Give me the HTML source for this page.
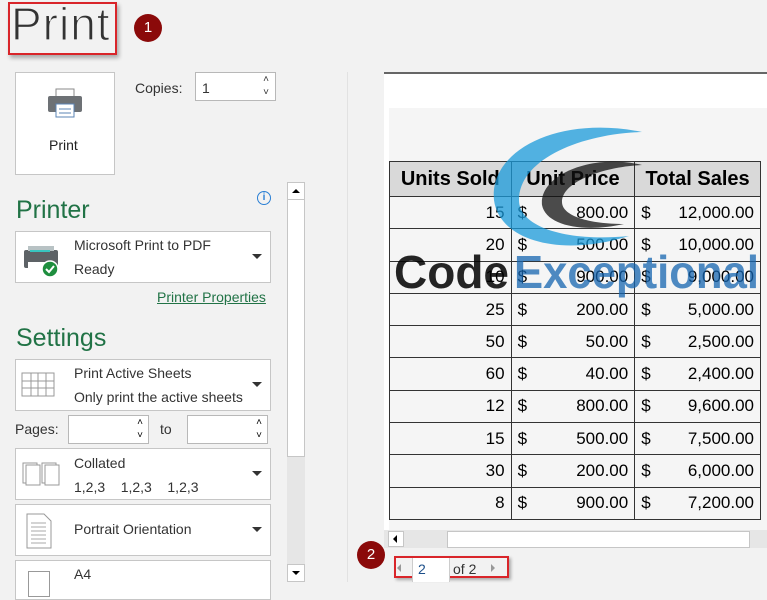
<!DOCTYPE html>
<html><head><style>
body{margin:0;width:767px;height:582px;overflow:hidden;background:#f2f2f2;font-family:"Liberation Sans",sans-serif;position:relative}
.a{position:absolute}
.dd{position:absolute;left:15px;width:256px;background:#fff;border:1px solid #c6c6c6;box-sizing:border-box;font-size:14px;color:#333}
.tri{position:absolute;right:8px;width:0;height:0;border-left:5px solid transparent;border-right:5px solid transparent;border-top:5px solid #333}
table{border-collapse:collapse;font-family:"Liberation Sans",sans-serif}
td{border:1px solid #333;height:32.3px;padding:0 6px;font-size:17px;color:#000;box-sizing:border-box}
th{border:1px solid #333;background:#d9d9d9;height:32px;font-size:20px;font-weight:bold}
.r{text-align:right}
.s{position:absolute;left:6px}
</style></head><body>
<div class="a" style="left:8px;top:2px;width:105px;height:49px;border:2px solid #d9252a;box-shadow:2px 3px 4px rgba(0,0,0,.3)"></div>
<div class="a" style="left:11px;top:-3px;font-size:46px;color:#333;letter-spacing:1px;-webkit-text-stroke:1.2px #f2f2f2">Print</div>
<div class="a" style="left:134px;top:14px;width:28px;height:28px;border-radius:50%;background:#8b0a0a;color:#fff;font-size:15px;text-align:center;line-height:28px">1</div>
<div class="a" style="left:15px;top:72px;width:100px;height:103px;background:#fff;border:1px solid #c6c6c6;box-sizing:border-box"></div>
<svg class="a" style="left:47px;top:88px" width="36" height="30"><rect x="9" y="1" width="18" height="9" fill="#fff" stroke="#8a8a8a"/><rect x="1" y="8" width="34" height="16" rx="2" fill="#6d7175"/><rect x="9" y="16" width="18" height="13" fill="#fff" stroke="#5b84b5"/><line x1="12" y1="21" x2="24" y2="21" stroke="#5b84b5"/><line x1="12" y1="25" x2="24" y2="25" stroke="#5b84b5"/></svg>
<div class="a" style="left:49px;top:137px;font-size:14px;color:#222">Print</div>
<div class="a" style="left:135px;top:80px;font-size:14px;color:#333">Copies:</div>
<div class="a" style="left:195px;top:72px;width:81px;height:29px;background:#fff;border:1px solid #b8b8b8;box-sizing:border-box;font-size:14px;padding:7px 6px;color:#333">1<span class="a" style="right:6px;top:0;font-size:10px;line-height:13px">˄<br>˅</span></div>
<div class="a" style="left:347px;top:72px;width:1px;height:510px;background:#e2e2e2"></div>
<div class="a" style="left:16px;top:196px;font-size:25px;color:#217346">Printer</div>
<div class="a" style="left:257px;top:191px;width:12px;height:12px;border:1.5px solid #2a7fd4;border-radius:50%;color:#2a7fd4;font-size:10px;text-align:center;line-height:12px;font-weight:bold">i</div>
<div class="dd" style="top:231px;height:52px"><svg class="a" style="left:6px;top:12px" width="40" height="34"><rect x="2" y="6" width="34" height="18" rx="2" fill="#5d6266"/><rect x="6" y="2" width="26" height="5" fill="#b8c2c4"/><rect x="8" y="6" width="20" height="2" fill="#38c5c0"/><rect x="6" y="18" width="22" height="6" fill="#fff"/><circle cx="28" cy="25" r="8" fill="#1e8e3e" stroke="#fff" stroke-width="1.5"/><path d="M24 25l3 3 5-6" stroke="#fff" stroke-width="2" fill="none"/></svg><div class="a" style="left:58px;top:5px">Microsoft Print to PDF</div><div class="a" style="left:58px;top:29px">Ready</div><div class="tri" style="top:22px"></div></div>
<div class="a" style="left:157px;top:289px;font-size:14px;color:#217346;text-decoration:underline">Printer Properties</div>
<div class="a" style="left:16px;top:324px;font-size:25px;color:#217346">Settings</div>
<div class="dd" style="top:359px;height:52px"><svg class="a" style="left:5px;top:12px" width="34" height="28"><g stroke="#999" fill="#fff"><rect x="1" y="1" width="32" height="23"/><path d="M1 9h32M1 16h32M10 1v23M17 1v23M25 1v23"/></g></svg><div class="a" style="left:58px;top:5px">Print Active Sheets</div><div class="a" style="left:58px;top:29px">Only print the active sheets</div><div class="tri" style="top:22px"></div></div>
<div class="a" style="left:15px;top:421px;font-size:14px;color:#333">Pages:</div>
<div class="a" style="left:68px;top:415px;width:81px;height:29px;background:#fff;border:1px solid #b8b8b8;box-sizing:border-box"><span class="a" style="right:5px;top:0;font-size:10px;line-height:13px">˄<br>˅</span></div>
<div class="a" style="left:160px;top:421px;font-size:14px;color:#333">to</div>
<div class="a" style="left:187px;top:415px;width:81px;height:29px;background:#fff;border:1px solid #b8b8b8;box-sizing:border-box"><span class="a" style="right:5px;top:0;font-size:10px;line-height:13px">˄<br>˅</span></div>
<div class="dd" style="top:448px;height:52px"><svg class="a" style="left:5px;top:12px" width="40" height="26"><g stroke="#999" fill="#fff"><rect x="2" y="2" width="14" height="20"/><rect x="5" y="4" width="14" height="20"/><rect x="21" y="2" width="14" height="20"/><rect x="24" y="4" width="14" height="20"/></g></svg><div class="a" style="left:58px;top:6px">Collated</div><div class="a" style="left:58px;top:30px;word-spacing:0">1,2,3&nbsp;&nbsp;&nbsp;&nbsp;1,2,3&nbsp;&nbsp;&nbsp;&nbsp;1,2,3</div><div class="tri" style="top:22px"></div></div>
<div class="dd" style="top:504px;height:52px"><svg class="a" style="left:10px;top:8px" width="26" height="36"><path d="M1 1h17l7 7v27H1z" fill="#fff" stroke="#999"/><path d="M5 10h15M5 14h15M5 18h15M5 22h15M5 26h15M5 30h15" stroke="#aaa"/></svg><div class="a" style="left:58px;top:16px">Portrait Orientation</div><div class="tri" style="top:22px"></div></div>
<div class="dd" style="top:560px;height:40px"><div class="a" style="left:12px;top:10px;width:20px;height:24px;border:1px solid #999"></div><div class="a" style="left:58px;top:5px">A4</div></div>
<div class="a" style="left:287px;top:182px;width:18px;height:400px;background:#e6e6e6"></div>
<div class="a" style="left:287px;top:182px;width:18px;height:275px;background:#fff;border:1px solid #c6c6c6;box-sizing:border-box"></div>
<div class="a" style="left:287px;top:182px;width:18px;height:18px;border:1px solid #c6c6c6;box-sizing:border-box;background:#fff"><div class="a" style="left:4px;top:6px;border-left:4px solid transparent;border-right:4px solid transparent;border-bottom:4px solid #000"></div></div>
<div class="a" style="left:287px;top:564px;width:18px;height:18px;border:1px solid #c6c6c6;box-sizing:border-box;background:#fff"><div class="a" style="left:4px;top:6px;border-left:4px solid transparent;border-right:4px solid transparent;border-top:4px solid #000"></div></div>
<div class="a" style="left:384px;top:72px;width:383px;height:2px;background:#666"></div>
<div class="a" style="left:384px;top:74px;width:383px;height:456px;background:#fff"></div>
<div class="a" style="left:389px;top:108px;width:378px;height:422px;background:#f5f5f5"></div>
<table class="a" style="left:389px;top:161px;width:372px">
<colgroup><col style="width:122px"><col style="width:124px"><col style="width:126px"></colgroup>
<tr><th>Units Sold</th><th>Unit Price</th><th>Total Sales</th></tr>
<tr><td class="r">15</td><td class="r" style="position:relative"><span class="s">$</span>800.00</td><td class="r" style="position:relative"><span class="s">$</span>12,000.00</td></tr>
<tr><td class="r">20</td><td class="r" style="position:relative"><span class="s">$</span>500.00</td><td class="r" style="position:relative"><span class="s">$</span>10,000.00</td></tr>
<tr><td class="r">10</td><td class="r" style="position:relative"><span class="s">$</span>900.00</td><td class="r" style="position:relative"><span class="s">$</span>9,000.00</td></tr>
<tr><td class="r">25</td><td class="r" style="position:relative"><span class="s">$</span>200.00</td><td class="r" style="position:relative"><span class="s">$</span>5,000.00</td></tr>
<tr><td class="r">50</td><td class="r" style="position:relative"><span class="s">$</span>50.00</td><td class="r" style="position:relative"><span class="s">$</span>2,500.00</td></tr>
<tr><td class="r">60</td><td class="r" style="position:relative"><span class="s">$</span>40.00</td><td class="r" style="position:relative"><span class="s">$</span>2,400.00</td></tr>
<tr><td class="r">12</td><td class="r" style="position:relative"><span class="s">$</span>800.00</td><td class="r" style="position:relative"><span class="s">$</span>9,600.00</td></tr>
<tr><td class="r">15</td><td class="r" style="position:relative"><span class="s">$</span>500.00</td><td class="r" style="position:relative"><span class="s">$</span>7,500.00</td></tr>
<tr><td class="r">30</td><td class="r" style="position:relative"><span class="s">$</span>200.00</td><td class="r" style="position:relative"><span class="s">$</span>6,000.00</td></tr>
<tr><td class="r">8</td><td class="r" style="position:relative"><span class="s">$</span>900.00</td><td class="r" style="position:relative"><span class="s">$</span>7,200.00</td></tr>
</table>
<svg class="a" style="left:384px;top:120px" width="383" height="180">
<path d="M258 12 C175 -5 105 30 110 80 C115 120 175 138 245 116 C185 122 135 108 135 80 C135 40 195 14 258 12Z" fill="#1a9ad9" opacity=".75"/>
<path d="M258 45 C208 33 155 55 158 85 C162 106 200 113 240 104 C205 104 178 96 178 82 C178 62 218 47 258 45Z" fill="#111" opacity=".75"/>
<text x="10" y="168" font-family="Liberation Sans" font-weight="bold" font-size="46" fill="#000" opacity=".85">Code</text>
<text x="130" y="168" font-family="Liberation Sans" font-weight="bold" font-size="46" fill="#1565b0" opacity=".75" textLength="245" lengthAdjust="spacingAndGlyphs">Exceptional</text>
</svg>
<div class="a" style="left:384px;top:530px;width:383px;height:18px;background:#e6e6e6"></div>
<div class="a" style="left:388px;top:531px;width:16px;height:16px;background:#fff;border:1px solid #c6c6c6;box-sizing:border-box"><div class="a" style="left:4px;top:3px;border-top:4px solid transparent;border-bottom:4px solid transparent;border-right:4px solid #000"></div></div>
<div class="a" style="left:447px;top:531px;width:303px;height:17px;background:#fff;border:1px solid #c6c6c6;box-sizing:border-box"></div>
<div class="a" style="left:357px;top:541px;width:28px;height:28px;border-radius:50%;background:#8b0a0a;color:#fff;font-size:15px;text-align:center;line-height:28px">2</div>
<div class="a" style="left:394px;top:556px;width:115px;height:22px;border:2px solid #d9252a;box-shadow:2px 2px 3px rgba(0,0,0,.3);box-sizing:border-box"></div>
<div class="a" style="left:412px;top:558px;width:36px;height:24px;background:#fff;border-left:1px solid #ccc;border-right:1px solid #ccc"></div>
<div class="a" style="left:397px;top:564px;border-top:4px solid transparent;border-bottom:4px solid transparent;border-right:4px solid #999"></div>
<div class="a" style="left:418px;top:561px;font-size:14px;color:#1c4f8a">2</div>
<div class="a" style="left:453px;top:561px;font-size:14px;color:#333">of 2</div>
<div class="a" style="left:491px;top:564px;border-top:4px solid transparent;border-bottom:4px solid transparent;border-left:4px solid #999"></div>
</body></html>
